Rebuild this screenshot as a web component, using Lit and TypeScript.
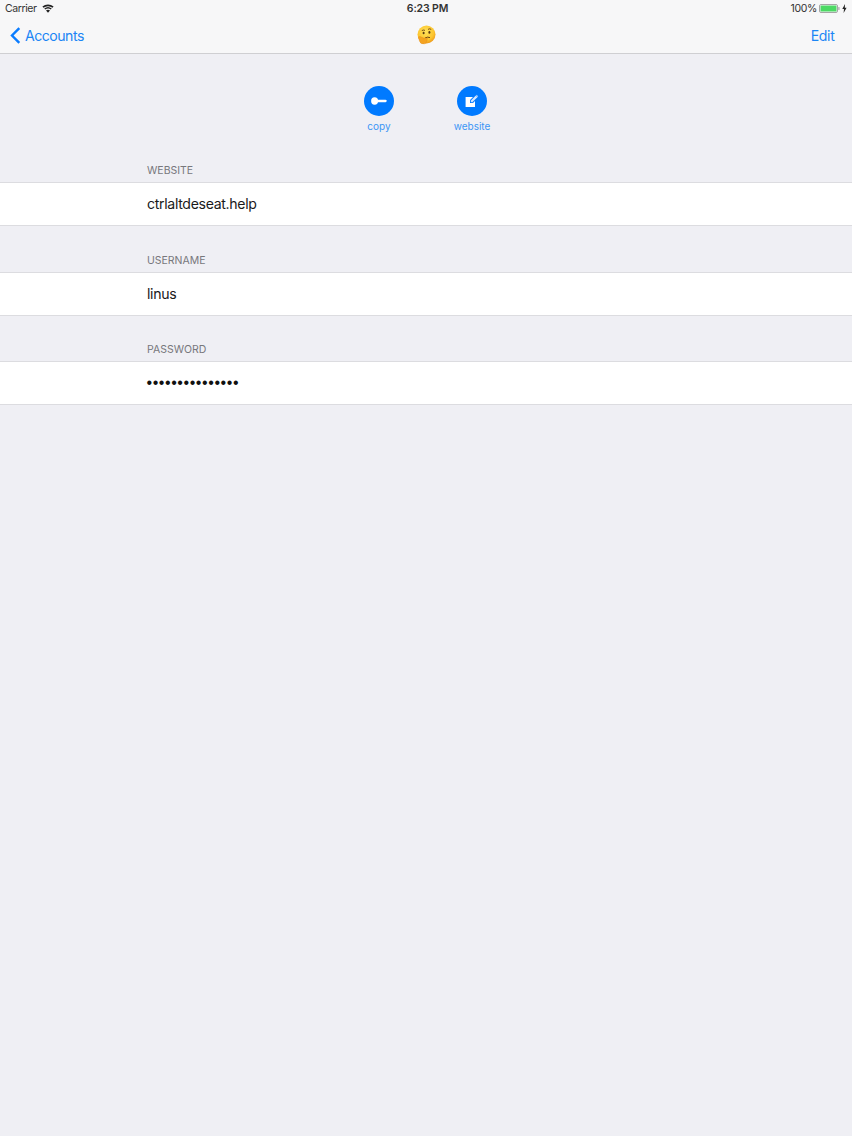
import { LitElement, html, css } from "lit";
import { customElement } from "lit/decorators.js";

@customElement("app-root")
export class AppRoot extends LitElement {
  static styles = css`
    :host { display: block; width: 852px; height: 1136px; background: #efeff4; font-family: "Inter", "Liberation Sans", sans-serif; overflow: hidden; }
    .bar { background: #f7f7f8; border-bottom: 1px solid #cfcfd2; height: 53px; display: flex; flex-direction: column; }
    .status { height: 17px; display: grid; grid-template-columns: 1fr auto 1fr; align-items: center; padding: 0 5px; font-size: 10.5px; color: #333; }
    .status .l { display: flex; align-items: center; gap: 5px; letter-spacing: -0.4px; }
    .status .time { font-weight: 600; letter-spacing: -0.15px; padding-left: 3px; }
    .status .r { display: flex; align-items: center; justify-content: flex-end; gap: 2px; letter-spacing: -0.35px; }
    .nav { flex: 1; display: grid; grid-template-columns: 1fr auto 1fr; align-items: center; padding: 0 17px; font-size: 14.1px; letter-spacing: -0.32px; color: #1c86f5; }
    .back { display: flex; align-items: center; gap: 4px; margin-left: -7px; letter-spacing: -0.5px; }
    .edit { text-align: right; padding-right: 0.5px; }
    .emoji { display: block; }
    .actions { display: flex; justify-content: center; gap: 63px; padding: 32px 1px 0 0; height: 76px; }
    .action { width: 30px; display: flex; flex-direction: column; align-items: center; color: #3d96f5; font-size: 10px; white-space: nowrap; }
    .circle { width: 30px; height: 30px; border-radius: 50%; background: #007aff; display: flex; align-items: center; justify-content: center; margin-bottom: 4px; }
    .label { display: flex; align-items: flex-end; padding: 0 0 5px 147px; font-size: 10.5px; color: #77777c; line-height: 13px; box-sizing: border-box; }
    .first { height: 26px; margin-top: -6px; }
    .second { height: 46px; }
    .third { height: 45px; }
    .row { height: 42px; box-sizing: content-box; background: #fff; border-top: 1px solid #dcdce0; border-bottom: 1px solid #dcdce0; display: flex; align-items: center; padding-left: 147px; font-size: 14.1px; letter-spacing: -0.32px; color: #1a1a1a; }
    .txt { padding-bottom: 2px; }
    .pw { font-family: "Liberation Sans", sans-serif; font-size: 16px; letter-spacing: 0.57px; color: #111; margin-left: -0.5px; }
  `;

  render() {
    return html`
      <div class="bar">
        <div class="status">
          <div class="l">
            <span>Carrier</span>
            <svg width="12" height="9" viewBox="0 0 12 9"><path d="M6 8.8 L4 6.6 A3 3 0 0 1 8 6.6Z M3.2 5.6 A4.4 4.4 0 0 1 8.8 5.6 L9.7 4.6 A5.7 5.7 0 0 0 2.3 4.6Z M1.5 3.8 A7 7 0 0 1 10.5 3.8 L11.6 2.6 A8.6 8.6 0 0 0 .4 2.6Z" fill="#222"/></svg>
          </div>
          <div class="time">6:23 PM</div>
          <div class="r">
            <span>100%</span>
            <svg width="21" height="9" viewBox="0 0 21 9"><rect x=".5" y=".5" width="18" height="8" rx="1.5" fill="none" stroke="#a5a5a5"/><rect x="1.5" y="1.5" width="16" height="6" rx=".6" fill="#4cd964"/><rect x="19.3" y="3" width="1.2" height="3" rx=".5" fill="#a5a5a5"/></svg>
            <svg width="5" height="9" viewBox="0 0 5 9"><path d="M3 0 L0.3 5 H2 L1.6 9 L4.6 3.8 H2.8Z" fill="#222"/></svg>
          </div>
        </div>
        <div class="nav">
          <div class="back">
            <svg width="11" height="17" viewBox="0 0 11 17"><path d="M9.3 1.2 L2 8.5 L9.3 15.8" fill="none" stroke="#0a7cff" stroke-width="2.4"/></svg>
            <span>Accounts</span>
          </div>
          <svg class="emoji" width="20" height="20" viewBox="0 0 20 20">
            <defs><radialGradient id="f" cx="45%" cy="35%" r="65%"><stop offset="0" stop-color="#ffe25a"/><stop offset=".7" stop-color="#fcc52e"/><stop offset="1" stop-color="#ee9a1c"/></radialGradient></defs>
            <circle cx="10.5" cy="9.5" r="9" fill="url(#f)"/>
            <ellipse cx="7.6" cy="8" rx="1" ry="1.3" fill="#5a3a12"/>
            <ellipse cx="13.4" cy="7.4" rx="1" ry="1.4" fill="#5a3a12"/>
            <path d="M5.8 5.6 Q7.4 4.6 9 5.4 M12 4.4 Q13.6 3.2 15.2 4.4" fill="none" stroke="#6b4514" stroke-width=".9"/>
            <path d="M9 13 Q11.5 11.5 14 12.6" fill="none" stroke="#6b4514" stroke-width="1"/>
            <path d="M2.6 13.2 Q2 11.2 4 11.6 L7.6 13 Q9.6 13 11.2 13.2 Q12.4 14 10.8 14.7 Q11.6 16 10.4 16.7 Q10.4 18.6 8.4 18.8 Q4.4 19.4 3.6 16.2Z" fill="#f4a321" stroke="#e08a16" stroke-width=".4"/>
          </svg>
          <div class="edit">Edit</div>
        </div>
      </div>
      <div class="actions">
        <div class="action">
          <div class="circle">
            <svg width="16" height="8" viewBox="0 0 16 8"><ellipse cx="3.6" cy="4" rx="3.5" ry="3.7" fill="#fff"/><path d="M6 2.7 H14.6 Q15.6 3.2 16 4 L14.6 5.3 H6Z" fill="#fff"/></svg>
          </div>
          <span>copy</span>
        </div>
        <div class="action">
          <div class="circle">
            <svg width="14" height="14" viewBox="0 0 14 14"><path d="M.6 3 H8 L5 6 V9 H8 L10 7 V13 H.6Z" fill="#fff"/><path d="M6.2 7.8 L12.4 1.6" fill="none" stroke="#dbe9ff" stroke-width="2.2"/><path d="M10.4 .9 L13.1 3.6" stroke="#007aff" stroke-width=".6"/></svg>
          </div>
          <span>website</span>
        </div>
      </div>
      <div class="label first">WEBSITE</div>
      <div class="row"><span class="txt">ctrlaltdeseat.help</span></div>
      <div class="label second">USERNAME</div>
      <div class="row"><span class="txt">linus</span></div>
      <div class="label third">PASSWORD</div>
      <div class="row"><span class="pw">•••••••••••••••</span></div>
    `;
  }
}
